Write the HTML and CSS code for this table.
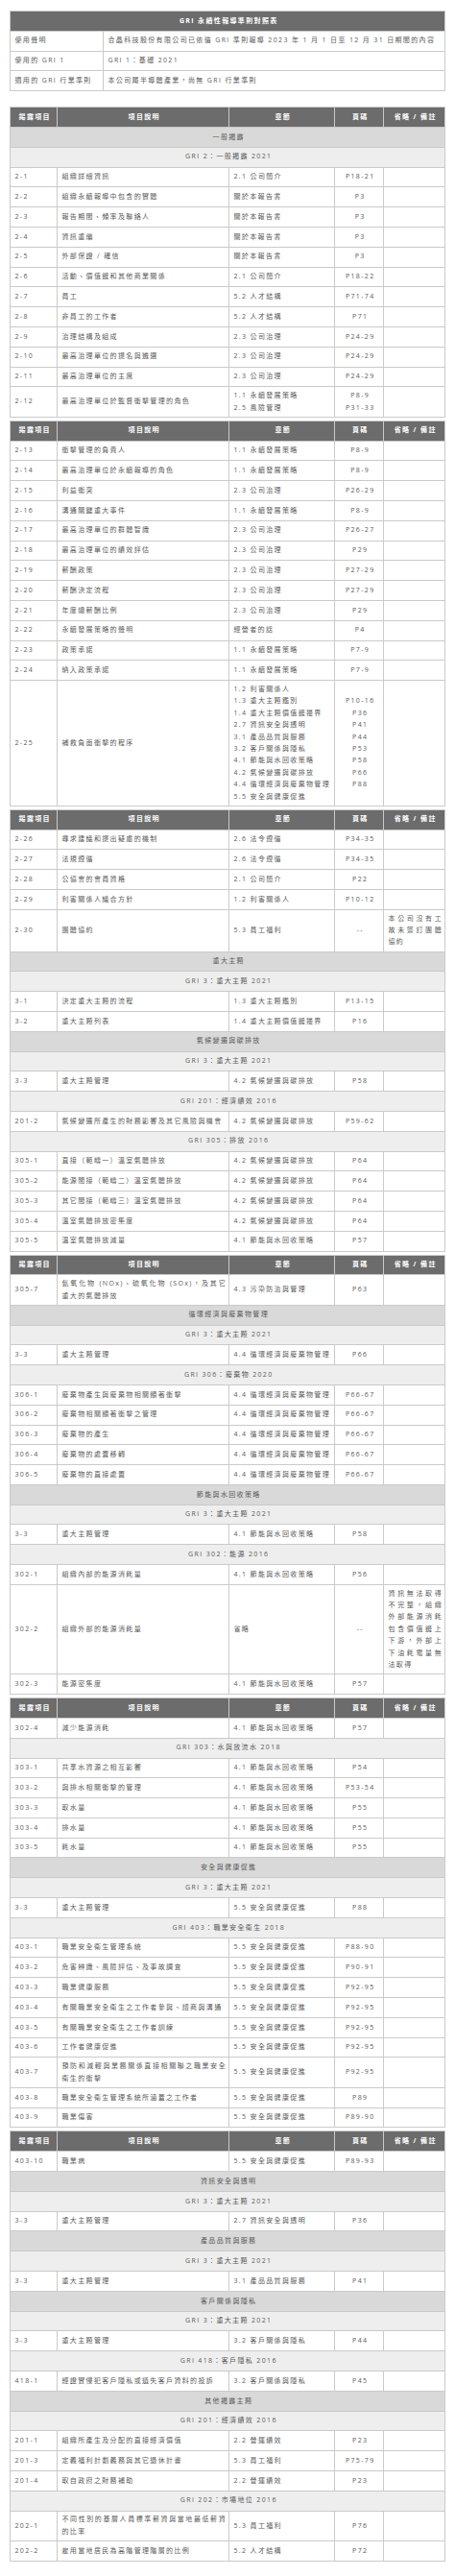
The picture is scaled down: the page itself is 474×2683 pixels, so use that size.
FILE: index.html
```html
<!DOCTYPE html>
<html lang="zh-Hant">
<head>
<meta charset="utf-8">
<title>GRI 永續性報導準則對照表</title>
<link rel="stylesheet" href="styles.css">
</head>
<body>
<div class="page">
<table class="info">
<colgroup><col class="ic1"><col class="ic2"></colgroup>
<tr class="head"><th colspan="2">GRI 永續性報導準則對照表</th></tr>
<tr><td>使用聲明</td><td>合晶科技股份有限公司已依循 GRI 準則報導 2023 年 1 月 1 日至 12 月 31 日期間的內容</td></tr>
<tr><td>使用的 GRI 1</td><td>GRI 1：基礎 2021</td></tr>
<tr><td>適用的 GRI 行業準則</td><td>本公司屬半導體產業，尚無 GRI 行業準則</td></tr>
</table>

<table class="gri">
<colgroup><col class="c1"><col class="c2"><col class="c3"><col class="c4"><col class="c5"></colgroup>
<tr class="head"><th>揭露項目</th><th>項目說明</th><th>章節</th><th>頁碼</th><th>省略 / 備註</th></tr>
<tr class="sec"><td colspan="5">一般揭露</td></tr>
<tr class="sub"><td colspan="5">GRI 2：一般揭露 2021</td></tr>
<tr><td>2-1</td><td>組織詳細資訊</td><td>2.1 公司簡介</td><td class="pg">P18-21</td><td></td></tr>
<tr><td>2-2</td><td>組織永續報導中包含的實體</td><td>關於本報告書</td><td class="pg">P3</td><td></td></tr>
<tr><td>2-3</td><td>報告期間、頻率及聯絡人</td><td>關於本報告書</td><td class="pg">P3</td><td></td></tr>
<tr><td>2-4</td><td>資訊重編</td><td>關於本報告書</td><td class="pg">P3</td><td></td></tr>
<tr><td>2-5</td><td>外部保證 / 確信</td><td>關於本報告書</td><td class="pg">P3</td><td></td></tr>
<tr><td>2-6</td><td>活動、價值鏈和其他商業關係</td><td>2.1 公司簡介</td><td class="pg">P18-22</td><td></td></tr>
<tr><td>2-7</td><td>員工</td><td>5.2 人才結構</td><td class="pg">P71-74</td><td></td></tr>
<tr><td>2-8</td><td>非員工的工作者</td><td>5.2 人才結構</td><td class="pg">P71</td><td></td></tr>
<tr><td>2-9</td><td>治理結構及組成</td><td>2.3 公司治理</td><td class="pg">P24-29</td><td></td></tr>
<tr><td>2-10</td><td>最高治理單位的提名與遴選</td><td>2.3 公司治理</td><td class="pg">P24-29</td><td></td></tr>
<tr><td>2-11</td><td>最高治理單位的主席</td><td>2.3 公司治理</td><td class="pg">P24-29</td><td></td></tr>
<tr><td>2-12</td><td>最高治理單位於監督衝擊管理的角色</td><td>1.1 永續發展策略<br>2.5 風險管理</td><td class="pg">P8-9<br>P31-33</td><td></td></tr>
</table>

<table class="gri">
<colgroup><col class="c1"><col class="c2"><col class="c3"><col class="c4"><col class="c5"></colgroup>
<tr class="head"><th>揭露項目</th><th>項目說明</th><th>章節</th><th>頁碼</th><th>省略 / 備註</th></tr>
<tr><td>2-13</td><td>衝擊管理的負責人</td><td>1.1 永續發展策略</td><td class="pg">P8-9</td><td></td></tr>
<tr><td>2-14</td><td>最高治理單位於永續報導的角色</td><td>1.1 永續發展策略</td><td class="pg">P8-9</td><td></td></tr>
<tr><td>2-15</td><td>利益衝突</td><td>2.3 公司治理</td><td class="pg">P26-29</td><td></td></tr>
<tr><td>2-16</td><td>溝通關鍵重大事件</td><td>1.1 永續發展策略</td><td class="pg">P8-9</td><td></td></tr>
<tr><td>2-17</td><td>最高治理單位的群體智識</td><td>2.3 公司治理</td><td class="pg">P26-27</td><td></td></tr>
<tr><td>2-18</td><td>最高治理單位的績效評估</td><td>2.3 公司治理</td><td class="pg">P29</td><td></td></tr>
<tr><td>2-19</td><td>薪酬政策</td><td>2.3 公司治理</td><td class="pg">P27-29</td><td></td></tr>
<tr><td>2-20</td><td>薪酬決定流程</td><td>2.3 公司治理</td><td class="pg">P27-29</td><td></td></tr>
<tr><td>2-21</td><td>年度總薪酬比例</td><td>2.3 公司治理</td><td class="pg">P29</td><td></td></tr>
<tr><td>2-22</td><td>永續發展策略的聲明</td><td>經營者的話</td><td class="pg">P4</td><td></td></tr>
<tr><td>2-23</td><td>政策承諾</td><td>1.1 永續發展策略</td><td class="pg">P7-9</td><td></td></tr>
<tr><td>2-24</td><td>納入政策承諾</td><td>1.1 永續發展策略</td><td class="pg">P7-9</td><td></td></tr>
<tr><td>2-25</td><td>補救負面衝擊的程序</td><td>1.2 利害關係人<br>1.3 重大主題鑑別<br>1.4 重大主題價值鏈邊界<br>2.7 資訊安全與透明<br>3.1 產品品質與服務<br>3.2 客戶關係與隱私<br>4.1 節能與水回收策略<br>4.2 氣候變遷與碳排放<br>4.4 循環經濟與廢棄物管理<br>5.5 安全與健康促進</td><td class="pg">P10-16<br>P36<br>P41<br>P44<br>P53<br>P58<br>P66<br>P88</td><td></td></tr>
</table>

<table class="gri">
<colgroup><col class="c1"><col class="c2"><col class="c3"><col class="c4"><col class="c5"></colgroup>
<tr class="head"><th>揭露項目</th><th>項目說明</th><th>章節</th><th>頁碼</th><th>省略 / 備註</th></tr>
<tr><td>2-26</td><td>尋求建議和提出疑慮的機制</td><td>2.6 法令遵循</td><td class="pg">P34-35</td><td></td></tr>
<tr><td>2-27</td><td>法規遵循</td><td>2.6 法令遵循</td><td class="pg">P34-35</td><td></td></tr>
<tr><td>2-28</td><td>公協會的會員資格</td><td>2.1 公司簡介</td><td class="pg">P22</td><td></td></tr>
<tr><td>2-29</td><td>利害關係人議合方針</td><td>1.2 利害關係人</td><td class="pg">P10-12</td><td></td></tr>
<tr><td>2-30</td><td>團體協約</td><td>5.3 員工福利</td><td class="pg">--</td><td>本公司沒有工故未簽訂團體協約</td></tr>
<tr class="sec"><td colspan="5">重大主題</td></tr>
<tr class="sub"><td colspan="5">GRI 3：重大主題 2021</td></tr>
<tr><td>3-1</td><td>決定重大主題的流程</td><td>1.3 重大主題鑑別</td><td class="pg">P13-15</td><td></td></tr>
<tr><td>3-2</td><td>重大主題列表</td><td>1.4 重大主題價值鏈邊界</td><td class="pg">P16</td><td></td></tr>
<tr class="sec"><td colspan="5">氣候變遷與碳排放</td></tr>
<tr class="sub"><td colspan="5">GRI 3：重大主題 2021</td></tr>
<tr><td>3-3</td><td>重大主題管理</td><td>4.2 氣候變遷與碳排放</td><td class="pg">P58</td><td></td></tr>
<tr class="sub"><td colspan="5">GRI 201：經濟績效 2016</td></tr>
<tr><td>201-2</td><td>氣候變遷所產生的財務影響及其它風險與機會</td><td>4.2 氣候變遷與碳排放</td><td class="pg">P59-62</td><td></td></tr>
<tr class="sub"><td colspan="5">GRI 305：排放 2016</td></tr>
<tr><td>305-1</td><td>直接（範疇一）溫室氣體排放</td><td>4.2 氣候變遷與碳排放</td><td class="pg">P64</td><td></td></tr>
<tr><td>305-2</td><td>能源間接（範疇二）溫室氣體排放</td><td>4.2 氣候變遷與碳排放</td><td class="pg">P64</td><td></td></tr>
<tr><td>305-3</td><td>其它間接（範疇三）溫室氣體排放</td><td>4.2 氣候變遷與碳排放</td><td class="pg">P64</td><td></td></tr>
<tr><td>305-4</td><td>溫室氣體排放密集度</td><td>4.2 氣候變遷與碳排放</td><td class="pg">P64</td><td></td></tr>
<tr><td>305-5</td><td>溫室氣體排放減量</td><td>4.1 節能與水回收策略</td><td class="pg">P57</td><td></td></tr>
</table>

<table class="gri">
<colgroup><col class="c1"><col class="c2"><col class="c3"><col class="c4"><col class="c5"></colgroup>
<tr class="head"><th>揭露項目</th><th>項目說明</th><th>章節</th><th>頁碼</th><th>省略 / 備註</th></tr>
<tr><td>305-7</td><td>氮氧化物 (NOx)、硫氧化物 (SOx)，及其它重大的氣體排放</td><td>4.3 污染防治與管理</td><td class="pg">P63</td><td></td></tr>
<tr class="sec"><td colspan="5">循環經濟與廢棄物管理</td></tr>
<tr class="sub"><td colspan="5">GRI 3：重大主題 2021</td></tr>
<tr><td>3-3</td><td>重大主題管理</td><td>4.4 循環經濟與廢棄物管理</td><td class="pg">P66</td><td></td></tr>
<tr class="sub"><td colspan="5">GRI 306：廢棄物 2020</td></tr>
<tr><td>306-1</td><td>廢棄物產生與廢棄物相關顯著衝擊</td><td>4.4 循環經濟與廢棄物管理</td><td class="pg">P66-67</td><td></td></tr>
<tr><td>306-2</td><td>廢棄物相關顯著衝擊之管理</td><td>4.4 循環經濟與廢棄物管理</td><td class="pg">P66-67</td><td></td></tr>
<tr><td>306-3</td><td>廢棄物的產生</td><td>4.4 循環經濟與廢棄物管理</td><td class="pg">P66-67</td><td></td></tr>
<tr><td>306-4</td><td>廢棄物的處置移轉</td><td>4.4 循環經濟與廢棄物管理</td><td class="pg">P66-67</td><td></td></tr>
<tr><td>306-5</td><td>廢棄物的直接處置</td><td>4.4 循環經濟與廢棄物管理</td><td class="pg">P66-67</td><td></td></tr>
<tr class="sec"><td colspan="5">節能與水回收策略</td></tr>
<tr class="sub"><td colspan="5">GRI 3：重大主題 2021</td></tr>
<tr><td>3-3</td><td>重大主題管理</td><td>4.1 節能與水回收策略</td><td class="pg">P58</td><td></td></tr>
<tr class="sub"><td colspan="5">GRI 302：能源 2016</td></tr>
<tr><td>302-1</td><td>組織內部的能源消耗量</td><td>4.1 節能與水回收策略</td><td class="pg">P56</td><td></td></tr>
<tr><td>302-2</td><td>組織外部的能源消耗量</td><td>省略</td><td class="pg">--</td><td>資訊無法取得不完整，組織外部能源消耗包含價值鏈上下游，外部上下油耗電量無法取得</td></tr>
<tr><td>302-3</td><td>能源密集度</td><td>4.1 節能與水回收策略</td><td class="pg">P57</td><td></td></tr>
</table>

<table class="gri">
<colgroup><col class="c1"><col class="c2"><col class="c3"><col class="c4"><col class="c5"></colgroup>
<tr class="head"><th>揭露項目</th><th>項目說明</th><th>章節</th><th>頁碼</th><th>省略 / 備註</th></tr>
<tr><td>302-4</td><td>減少能源消耗</td><td>4.1 節能與水回收策略</td><td class="pg">P57</td><td></td></tr>
<tr class="sub"><td colspan="5">GRI 303：水與放流水 2018</td></tr>
<tr><td>303-1</td><td>共享水資源之相互影響</td><td>4.1 節能與水回收策略</td><td class="pg">P54</td><td></td></tr>
<tr><td>303-2</td><td>與排水相關衝擊的管理</td><td>4.1 節能與水回收策略</td><td class="pg">P53-54</td><td></td></tr>
<tr><td>303-3</td><td>取水量</td><td>4.1 節能與水回收策略</td><td class="pg">P55</td><td></td></tr>
<tr><td>303-4</td><td>排水量</td><td>4.1 節能與水回收策略</td><td class="pg">P55</td><td></td></tr>
<tr><td>303-5</td><td>耗水量</td><td>4.1 節能與水回收策略</td><td class="pg">P55</td><td></td></tr>
<tr class="sec"><td colspan="5">安全與健康促進</td></tr>
<tr class="sub"><td colspan="5">GRI 3：重大主題 2021</td></tr>
<tr><td>3-3</td><td>重大主題管理</td><td>5.5 安全與健康促進</td><td class="pg">P88</td><td></td></tr>
<tr class="sub"><td colspan="5">GRI 403：職業安全衛生 2018</td></tr>
<tr><td>403-1</td><td>職業安全衛生管理系統</td><td>5.5 安全與健康促進</td><td class="pg">P88-90</td><td></td></tr>
<tr><td>403-2</td><td>危害辨識、風險評估、及事故調查</td><td>5.5 安全與健康促進</td><td class="pg">P90-91</td><td></td></tr>
<tr><td>403-3</td><td>職業健康服務</td><td>5.5 安全與健康促進</td><td class="pg">P92-95</td><td></td></tr>
<tr><td>403-4</td><td>有關職業安全衛生之工作者參與、諮商與溝通</td><td>5.5 安全與健康促進</td><td class="pg">P92-95</td><td></td></tr>
<tr><td>403-5</td><td>有關職業安全衛生之工作者訓練</td><td>5.5 安全與健康促進</td><td class="pg">P92-95</td><td></td></tr>
<tr><td>403-6</td><td>工作者健康促進</td><td>5.5 安全與健康促進</td><td class="pg">P92-95</td><td></td></tr>
<tr><td>403-7</td><td>預防和減輕與業務關係直接相關聯之職業安全衛生的衝擊</td><td>5.5 安全與健康促進</td><td class="pg">P92-95</td><td></td></tr>
<tr><td>403-8</td><td>職業安全衛生管理系統所涵蓋之工作者</td><td>5.5 安全與健康促進</td><td class="pg">P89</td><td></td></tr>
<tr><td>403-9</td><td>職業傷害</td><td>5.5 安全與健康促進</td><td class="pg">P89-90</td><td></td></tr>
</table>

<table class="gri">
<colgroup><col class="c1"><col class="c2"><col class="c3"><col class="c4"><col class="c5"></colgroup>
<tr class="head"><th>揭露項目</th><th>項目說明</th><th>章節</th><th>頁碼</th><th>省略 / 備註</th></tr>
<tr><td>403-10</td><td>職業病</td><td>5.5 安全與健康促進</td><td class="pg">P89-93</td><td></td></tr>
<tr class="sec"><td colspan="5">資訊安全與透明</td></tr>
<tr class="sub"><td colspan="5">GRI 3：重大主題 2021</td></tr>
<tr><td>3-3</td><td>重大主題管理</td><td>2.7 資訊安全與透明</td><td class="pg">P36</td><td></td></tr>
<tr class="sec"><td colspan="5">產品品質與服務</td></tr>
<tr class="sub"><td colspan="5">GRI 3：重大主題 2021</td></tr>
<tr><td>3-3</td><td>重大主題管理</td><td>3.1 產品品質與服務</td><td class="pg">P41</td><td></td></tr>
<tr class="sec"><td colspan="5">客戶關係與隱私</td></tr>
<tr class="sub"><td colspan="5">GRI 3：重大主題 2021</td></tr>
<tr><td>3-3</td><td>重大主題管理</td><td>3.2 客戶關係與隱私</td><td class="pg">P44</td><td></td></tr>
<tr class="sub"><td colspan="5">GRI 418：客戶隱私 2016</td></tr>
<tr><td>418-1</td><td>經證實侵犯客戶隱私或遺失客戶資料的投訴</td><td>3.2 客戶關係與隱私</td><td class="pg">P45</td><td></td></tr>
<tr class="sec"><td colspan="5">其他揭露主題</td></tr>
<tr class="sub"><td colspan="5">GRI 201：經濟績效 2016</td></tr>
<tr><td>201-1</td><td>組織所產生及分配的直接經濟價值</td><td>2.2 營運績效</td><td class="pg">P23</td><td></td></tr>
<tr><td>201-3</td><td>定義福利計劃義務與其它退休計畫</td><td>5.3 員工福利</td><td class="pg">P75-79</td><td></td></tr>
<tr><td>201-4</td><td>取自政府之財務補助</td><td>2.2 營運績效</td><td class="pg">P23</td><td></td></tr>
<tr class="sub"><td colspan="5">GRI 202：市場地位 2016</td></tr>
<tr><td>202-1</td><td>不同性別的基層人員標準薪資與當地最低薪資的比率</td><td>5.3 員工福利</td><td class="pg">P76</td><td></td></tr>
<tr><td>202-2</td><td>雇用當地居民為高階管理階層的比例</td><td>5.2 人才結構</td><td class="pg">P72</td><td></td></tr>
</table>
</div>
</body>
</html>
```
FILE: styles.css
```css
html, body {
  margin: 0;
  padding: 0;
  background: #ffffff;
}
.page {
  padding: 11px 0 0 10px;
  font-family: "Open Sans", "Noto Sans CJK TC", sans-serif;
  font-size: 7px;
  letter-spacing: 1.35px;
  color: #5a5a5a;
}
table {
  border-collapse: collapse;
  table-layout: fixed;
  width: 453px;
  margin-bottom: 3px;
}
table.info {
  margin-bottom: 16px;
}
.ic1 { width: 97px; }
.ic2 { width: 356px; }
.c1 { width: 49px; }
.c2 { width: 179px; }
.c3 { width: 110px; }
.c4 { width: 51px; }
.c5 { width: 64px; }
tr {
  height: 20.8px;
}
td, th {
  border: 1px solid #cacaca;
  padding: 2.8px 2px 2.8px 4.5px;
  line-height: 12.4px;
  vertical-align: middle;
  text-align: justify;
}
.head th {
  background: #6c6c6c;
  color: #ffffff;
  font-weight: 700;
  text-align: center;
  border-color: #cacaca;
}
.sec td {
  background: #d9d9d9;
  text-align: center;
}
.sub td {
  background: #eeeeee;
  text-align: center;
}
td.pg {
  text-align: center;
}
```
